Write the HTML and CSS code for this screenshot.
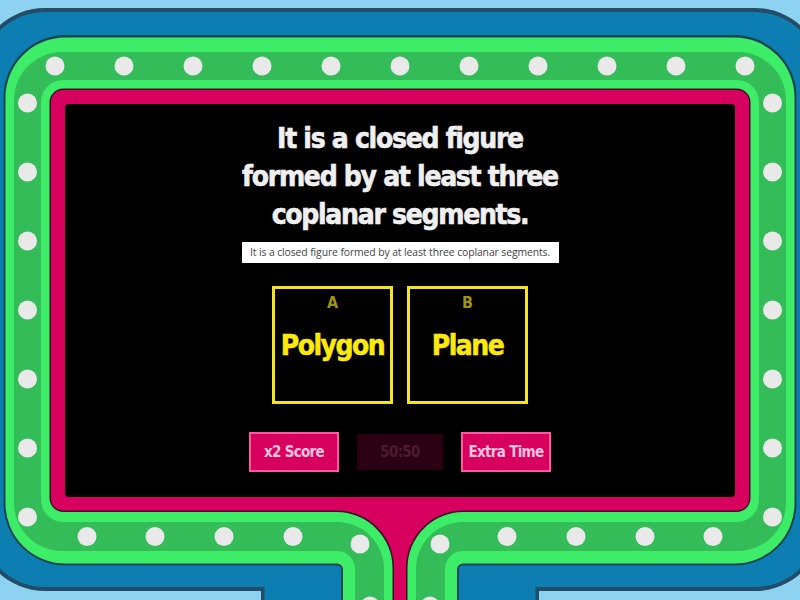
FILE: index.html
```html
<!DOCTYPE html>
<html lang="en">
<head>
<meta charset="utf-8">
<title>Quiz</title>
<link rel="stylesheet" href="styles.css">
</head>
<body>
<div class="stage">
  <svg class="decor" width="800" height="600" viewBox="0 0 800 600" aria-hidden="true">
    <rect width="800" height="600" fill="#8ed2f1"/>
    <path fill="#234d66" d="M45 8 H755 A68 68 0 0 1 823 76 V523 A68 68 0 0 1 755 591 H539 V610 H261 V591 H45 A68 68 0 0 1 -23 523 V76 A68 68 0 0 1 45 8 Z"/>
    <path fill="#0d7eb1" d="M45 12 H755 A64 64 0 0 1 819 76 V523 A64 64 0 0 1 755 587 H535.5 V610 H264.5 V587 H45 A64 64 0 0 1 -19 523 V76 A64 64 0 0 1 45 12 Z"/>
    <path fill="#1c4552" d="M65.5 35 H734.5 A62 62 0 0 1 796.5 97 V503.5 A62 62 0 0 1 734.5 565.5 H463 A4 4 0 0 0 459 569.5 V610 H341 V569.5 A4 4 0 0 0 337 565.5 H65.5 A62 62 0 0 1 3.5 503.5 V97 A62 62 0 0 1 65.5 35 Z"/>
    <path fill="#3ded68" d="M65.5 37.5 H734.5 A60 60 0 0 1 794.5 97.5 V503.5 A60 60 0 0 1 734.5 563.5 H463 A6 6 0 0 0 457 569.5 V610 H343 V569.5 A6 6 0 0 0 337 563.5 H65.5 A60 60 0 0 1 5.5 503.5 V97.5 A60 60 0 0 1 65.5 37.5 Z"/>
    <path fill="#33bc58" d="M62 52 H738 A48 48 0 0 1 786 100 V503 A48 48 0 0 1 738 551 H463 A18 18 0 0 0 445 569 V610 H355 V569 A18 18 0 0 0 337 551 H62 A48 48 0 0 1 14 503 V100 A48 48 0 0 1 62 52 Z"/>
    <path fill="#3ded68" d="M63 80 H737 A22 22 0 0 1 759 102 V500 A22 22 0 0 1 737 522 H463 A47 47 0 0 0 416 569 V610 H384 V569 A47 47 0 0 0 337 522 H63 A22 22 0 0 1 41 500 V102 A22 22 0 0 1 63 80 Z"/>
    <path fill="#3a1226" d="M63.5 88.5 H736.5 A14 14 0 0 1 750.5 102.5 V498 A14 14 0 0 1 736.5 512 H463.5 A56 56 0 0 0 407.5 568 V610 H392.5 V568 A56 56 0 0 0 336.5 512 H63.5 A14 14 0 0 1 49.5 498 V102.5 A14 14 0 0 1 63.5 88.5 Z"/>
    <path fill="#d8005f" d="M63 90 H737 A12 12 0 0 1 749 102 V498.5 A12 12 0 0 1 737 510.5 H463 A57 57 0 0 0 406 567.5 V610 H394 V567.5 A57 57 0 0 0 337 510.5 H63 A12 12 0 0 1 51 498.5 V102 A12 12 0 0 1 63 90 Z"/>
    <g fill="#e9e9e9">
      <circle cx="55" cy="66" r="9.5"/><circle cx="124" cy="66" r="9.5"/><circle cx="193" cy="66" r="9.5"/>
      <circle cx="262" cy="66" r="9.5"/><circle cx="331" cy="66" r="9.5"/><circle cx="400" cy="66" r="9.5"/>
      <circle cx="469" cy="66" r="9.5"/><circle cx="538" cy="66" r="9.5"/><circle cx="607" cy="66" r="9.5"/>
      <circle cx="676" cy="66" r="9.5"/><circle cx="745" cy="66" r="9.5"/>
      <circle cx="27.5" cy="103" r="9.5"/><circle cx="27.5" cy="172" r="9.5"/><circle cx="27.5" cy="241" r="9.5"/>
      <circle cx="27.5" cy="310" r="9.5"/><circle cx="27.5" cy="379" r="9.5"/><circle cx="27.5" cy="448" r="9.5"/>
      <circle cx="27.5" cy="517" r="9.5"/>
      <circle cx="772.5" cy="103" r="9.5"/><circle cx="772.5" cy="172" r="9.5"/><circle cx="772.5" cy="241" r="9.5"/>
      <circle cx="772.5" cy="310" r="9.5"/><circle cx="772.5" cy="379" r="9.5"/><circle cx="772.5" cy="448" r="9.5"/>
      <circle cx="772.5" cy="517" r="9.5"/>
      <circle cx="87" cy="536.5" r="9.5"/><circle cx="155" cy="536.5" r="9.5"/><circle cx="224" cy="536.5" r="9.5"/>
      <circle cx="293" cy="536.5" r="9.5"/><circle cx="360" cy="544" r="9.5"/>
      <circle cx="440" cy="544" r="9.5"/><circle cx="507" cy="536.5" r="9.5"/><circle cx="576" cy="536.5" r="9.5"/>
      <circle cx="645" cy="536.5" r="9.5"/><circle cx="713" cy="536.5" r="9.5"/>
      <circle cx="370" cy="606" r="9.5"/><circle cx="430" cy="606" r="9.5"/>
    </g>
  </svg>

  <main class="screen">
    <h1 class="question">It is a closed figure<br>formed by at least three<br>coplanar segments.</h1>
    <p class="caption">It is a closed figure formed by at least three coplanar segments.</p>
    <div class="answers">
      <div class="answer"><span class="letter">A</span><span class="word">Polygon</span></div>
      <div class="answer"><span class="letter">B</span><span class="word">Plane</span></div>
    </div>
    <div class="powerups">
      <button class="power">x2 Score</button>
      <button class="power disabled">50:50</button>
      <button class="power">Extra Time</button>
    </div>
  </main>
</div>
</body>
</html>
```

FILE: styles.css
```css
html, body {
  margin: 0;
  padding: 0;
}

body {
  width: 800px;
  height: 600px;
  overflow: hidden;
  background: #8ed2f1;
}

.stage {
  position: relative;
  width: 800px;
  height: 600px;
  padding: 104px 0 0 65px;
  box-sizing: border-box;
}

.decor {
  position: absolute;
  left: 0;
  top: 0;
}

.screen {
  position: relative;
  width: 670px;
  height: 393px;
  background: #000;
  border-radius: 4px;
  display: flex;
  flex-direction: column;
  align-items: center;
}

.question {
  margin: 16px 0 0;
  font-family: "DejaVu Sans Condensed", sans-serif;
  font-weight: 700;
  font-size: 28px;
  line-height: 38px;
  letter-spacing: -1.3px;
  -webkit-text-stroke: 0.6px #f0f0f0;
  color: #f0f0f0;
  text-align: center;
}

.caption {
  margin: 8px 0 0;
  width: 317px;
  height: 21px;
  box-sizing: border-box;
  background: #fff;
  font-family: "Open Sans", "DejaVu Sans", sans-serif;
  font-size: 10.4px;
  line-height: 21px;
  letter-spacing: -0.1px;
  color: #444;
  text-align: center;
  white-space: nowrap;
}

.answers {
  margin-top: 23px;
  display: flex;
  gap: 14px;
}

.answer {
  width: 121px;
  height: 118px;
  box-sizing: border-box;
  border: 3px solid #f4e41c;
  display: flex;
  flex-direction: column;
  align-items: center;
  padding-top: 4px;
  font-family: "DejaVu Sans Condensed", sans-serif;
  font-weight: 700;
}

.letter {
  font-size: 16px;
  line-height: 20px;
  color: #9e930c;
}

.word {
  margin-top: 16px;
  font-size: 28px;
  line-height: 34px;
  letter-spacing: -1.5px;
  -webkit-text-stroke: 0.5px #fde90e;
  color: #fde90e;
}

.powerups {
  margin-top: 28px;
  display: flex;
  gap: 16px;
}

.power {
  width: 90px;
  height: 40px;
  box-sizing: border-box;
  border: 2px solid #ff5a9f;
  background: #d8005f;
  color: #ffc4de;
  font-family: "DejaVu Sans Condensed", sans-serif;
  font-weight: 700;
  font-size: 15px;
  letter-spacing: -0.7px;
  white-space: nowrap;
  padding: 0;
}

.power.disabled {
  border-color: #000;
  background: #2a0012;
  color: #4c1b30;
}
```
